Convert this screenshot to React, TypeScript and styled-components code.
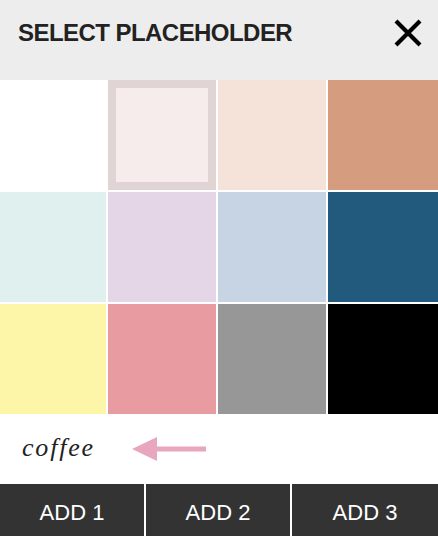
import React, { FC, useState } from 'react';
import styled, { createGlobalStyle } from 'styled-components';

const GlobalStyle = createGlobalStyle`
  html, body {
    margin: 0;
    padding: 0;
    background: #fff;
  }
`;

const SWATCHES = [
  '#ffffff', '#f7ecec', '#f5e3da', '#d69c7f',
  '#dff0ef', '#e4d6e6', '#c6d4e4', '#225a7e',
  '#fdf6a8', '#e89ca2', '#979797', '#000000',
];

const Wrapper = styled.div`
  width: 438px;
  height: 536px;
  display: flex;
  flex-direction: column;
  background: #fff;
  overflow: hidden;
`;

const Header = styled.div`
  height: 80px;
  box-sizing: border-box;
  padding: 0 16px 14px 18px;
  display: flex;
  align-items: center;
  justify-content: space-between;
  background: #ededed;
`;

const Title = styled.h1`
  margin: 0;
  font-family: 'Liberation Sans', Arial, sans-serif;
  font-size: 24px;
  font-weight: 700;
  letter-spacing: -0.55px;
  color: #222;
`;

const CloseButton = styled.button`
  width: 28px;
  height: 28px;
  padding: 0;
  border: none;
  background: transparent;
  display: flex;
  align-items: center;
  justify-content: center;
  cursor: pointer;
`;

const Grid = styled.div`
  display: grid;
  grid-template-columns: 106px 108px 108px 1fr;
  grid-auto-rows: 110px;
  gap: 2px;
  background: #fff;
`;

const Swatch = styled.div<{ color: string; selected?: boolean }>`
  background: ${(props) => props.color};
  box-sizing: border-box;
  border: ${(props) => (props.selected ? '8px solid #e0d4d4' : 'none')};
  cursor: pointer;
`;

const NameRow = styled.div`
  height: 70px;
  display: flex;
  align-items: center;
  padding-left: 22px;
  gap: 36px;
`;

const Name = styled.span`
  font-family: 'Liberation Serif', 'Times New Roman', serif;
  font-style: italic;
  font-size: 26px;
  letter-spacing: 1.8px;
  color: #222;
  margin-top: -2px;
`;

const Footer = styled.div`
  height: 52px;
  display: grid;
  grid-template-columns: 144px 144px 1fr;
  gap: 2px;
  background: #fff;
`;

const AddButton = styled.button`
  border: none;
  margin: 0;
  background: #333;
  color: #fff;
  font-family: 'Liberation Sans', Arial, sans-serif;
  font-size: 22px;
  padding-top: 7px;
  cursor: pointer;
`;

const App: FC = () => {
  const [selected, setSelected] = useState(1);

  return (
    <>
      <GlobalStyle />
      <Wrapper>
        <Header>
          <Title>SELECT PLACEHOLDER</Title>
          <CloseButton aria-label="close">
            <svg width="28" height="28" viewBox="0 0 28 28">
              <path d="M2 2 L26 26 M26 2 L2 26" stroke="#000" strokeWidth="4.2" />
            </svg>
          </CloseButton>
        </Header>
        <Grid>
          {SWATCHES.map((color, i) => (
            <Swatch
              key={i}
              color={color}
              selected={i === selected}
              onClick={() => setSelected(i)}
            />
          ))}
        </Grid>
        <NameRow>
          <Name>coffee</Name>
          <svg width="76" height="28" viewBox="0 0 76 28">
            <path d="M1 14 L26 2 L26 26 Z" fill="#e8a6bf" />
            <rect x="24" y="11.5" width="51" height="5" fill="#e8a6bf" />
          </svg>
        </NameRow>
        <Footer>
          <AddButton>ADD 1</AddButton>
          <AddButton>ADD 2</AddButton>
          <AddButton>ADD 3</AddButton>
        </Footer>
      </Wrapper>
    </>
  );
};

export default App;
